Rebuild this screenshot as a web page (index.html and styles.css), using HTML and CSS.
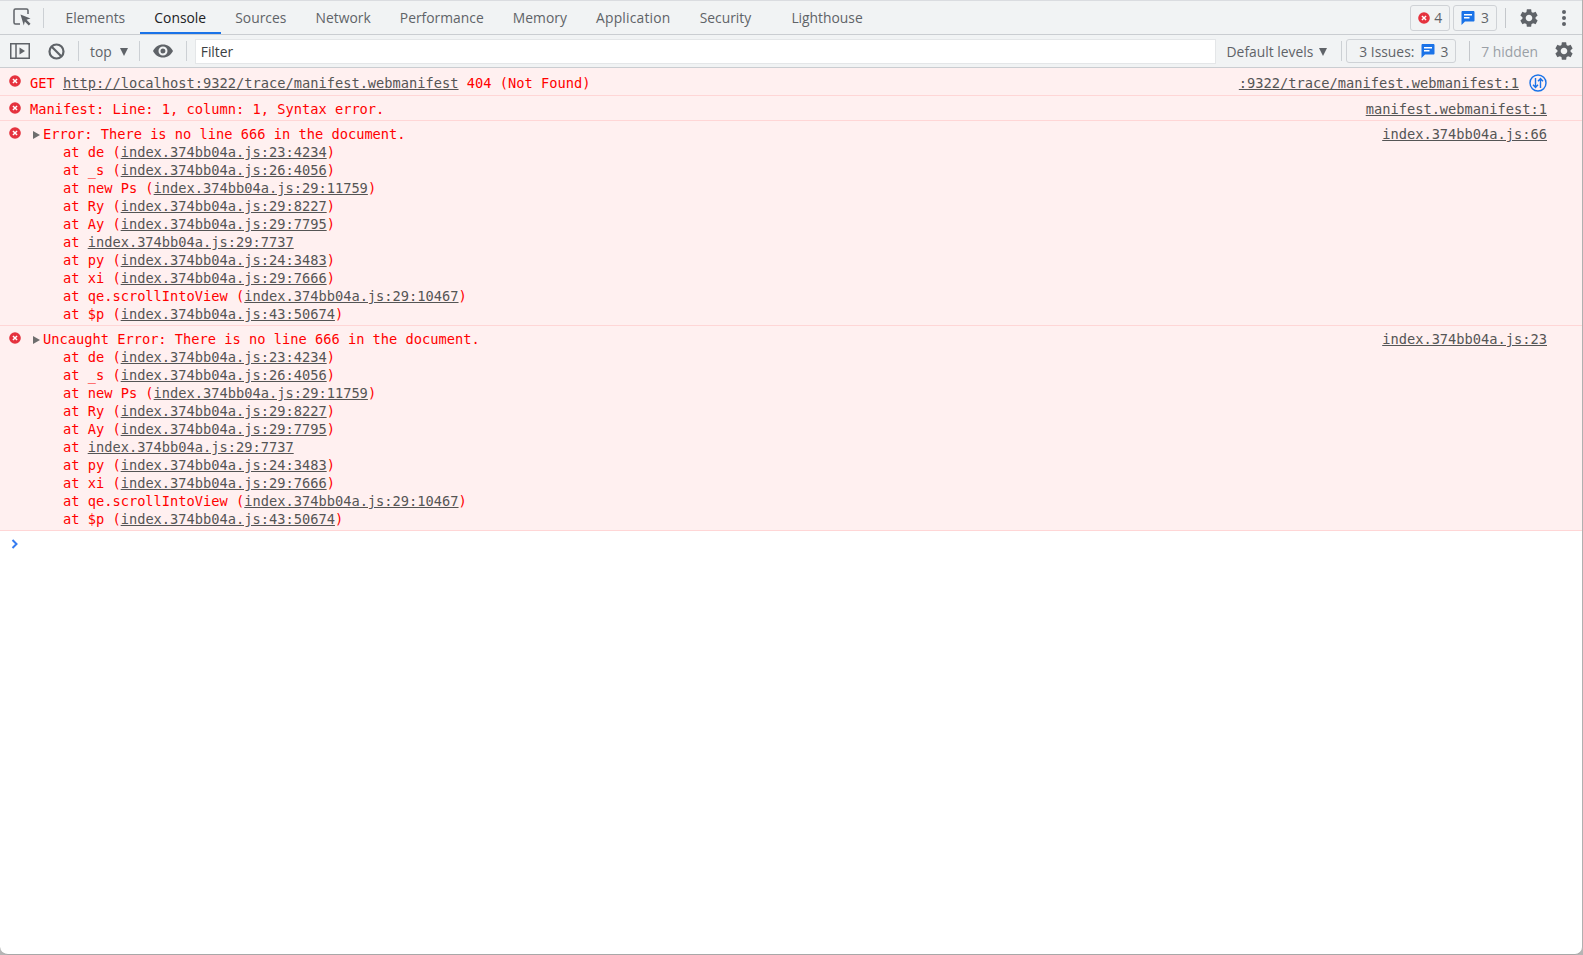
FILE: index.html
```html
<!DOCTYPE html>
<html lang="en">
<head>
    <meta charset="UTF-8">
    <title>DevTools - Console</title>
    <link rel="stylesheet" href="styles.css">
</head>
<body>
    <svg class="defs" width="0" height="0">
        <symbol id="gear" viewBox="0 0 24 24"><path d="M19.14 12.94c.04-.3.06-.61.06-.94 0-.32-.02-.64-.07-.94l2.03-1.58c.18-.14.23-.41.12-.61l-1.92-3.32c-.12-.22-.37-.29-.59-.22l-2.39.96c-.5-.38-1.03-.7-1.62-.94l-.36-2.54c-.04-.24-.24-.41-.48-.41h-3.84c-.24 0-.43.17-.47.41l-.36 2.54c-.59.24-1.13.57-1.62.94l-2.39-.96c-.22-.08-.47 0-.59.22L2.74 8.87c-.12.21-.08.47.12.61l2.03 1.58c-.05.3-.09.63-.09.94s.02.64.07.94l-2.03 1.58c-.18.14-.23.41-.12.61l1.92 3.32c.12.22.37.29.59.22l2.39-.96c.5.38 1.03.7 1.62.94l.36 2.54c.05.24.24.41.48.41h3.84c.24 0 .44-.17.47-.41l.36-2.54c.59-.24 1.13-.56 1.62-.94l2.39.96c.22.08.47 0 .59-.22l1.92-3.32c.12-.22.07-.47-.12-.61l-2.01-1.58zM12 15.6c-1.98 0-3.6-1.62-3.6-3.6s1.62-3.6 3.6-3.6 3.6 1.62 3.6 3.6-1.62 3.6-3.6 3.6z"/></symbol>
        <symbol id="err" viewBox="0 0 14 14"><circle cx="7" cy="7" r="6.8" fill="#e5323e"/><path d="M4.6 4.6l4.8 4.8M9.4 4.6l-4.8 4.8" stroke="#fff" stroke-width="1.7"/></symbol>
        <symbol id="chat" viewBox="0 0 14 16"><path d="M1.6 1h10.8c.6 0 1.1.5 1.1 1.1v8.3c0 .6-.5 1.1-1.1 1.1H4L.5 15V2.100C.5 1.500 1 1 1.600 1z" fill="#1a73e8"/><path d="M3 4h8v1.400H3zM3 7h5.500v1.400H3z" fill="#fff"/></symbol>
    </svg>

    <div class="tabbar">
        <svg class="inspect" width="19" height="19" viewBox="0 0 19 19"><path d="M7 16H2.500A1.500 1.500 0 0 1 1 14.500V2.500A1.500 1.500 0 0 1 2.500 1h11A1.500 1.500 0 0 1 15 2.500V6" fill="none" stroke="#5f6368" stroke-width="1.500"/><path d="M7.500 6.500l10 4-4 1.300 4 4-1.700 1.700-4-4-1 4z" fill="#5f6368"/></svg>
        <span class="sep sep-tabs"></span>
        <span class="tab">Elements</span>
        <span class="tab active">Console</span>
        <span class="tab">Sources</span>
        <span class="tab">Network</span>
        <span class="tab">Performance</span>
        <span class="tab">Memory</span>
        <span class="tab tab-app">Application</span>
        <span class="tab">Security</span>
        <span class="tab tab-last">Lighthouse</span>
        <span class="grow"></span>
        <span class="badge"><svg width="12" height="12"><use href="#err"/></svg>4</span>
        <span class="badge badge-msg"><svg width="14" height="16"><use href="#chat"/></svg>3</span>
        <span class="sep sep-badges"></span>
        <svg class="gear gear-top" width="22" height="22"><use href="#gear"/></svg>
        <svg class="dots" width="6" height="18" viewBox="0 0 6 18"><circle cx="3" cy="3" r="2"/><circle cx="3" cy="9" r="2"/><circle cx="3" cy="15" r="2"/></svg>
    </div>

    <div class="toolbar">
        <svg class="dock" width="20" height="16" viewBox="0 0 20 16"><rect x=".75" y=".75" width="18.500" height="14.500" fill="none" stroke="#5f6368" stroke-width="1.500"/><path d="M6 1v14" stroke="#5f6368" stroke-width="1.500"/><path d="M9.500 4.500l5.500 3.500-5.500 3.500z" fill="#5f6368"/></svg>
        <svg class="block" width="17" height="17" viewBox="0 0 17 17"><circle cx="8.500" cy="8.500" r="7" fill="none" stroke="#5f6368" stroke-width="2.200"/><path d="M3.500 3.500l10 10" stroke="#5f6368" stroke-width="2.200"/></svg>
        <span class="sep sep-a"></span>
        <span class="ctx">top</span>
        <span class="arrow arrow-ctx"></span>
        <span class="sep sep-b"></span>
        <svg class="eye" width="20" height="14" viewBox="0 0 20 14"><path d="M10 .5C5.500.5 1.800 3.200 0 7c1.800 3.800 5.500 6.500 10 6.500s8.200-2.700 10-6.500C18.200 3.200 14.500.5 10 .5zM10 11.500A4.500 4.500 0 1 1 10 2.500a4.500 4.500 0 0 1 0 9zM10 4.500a2.500 2.500 0 1 0 0 5 2.500 2.500 0 0 0 0-5z" fill="#5f6368"/></svg>
        <span class="sep sep-c"></span>
        <div class="filter">Filter</div>
        <span class="levels">Default levels</span>
        <span class="arrow arrow-levels"></span>
        <span class="sep sep-d"></span>
        <span class="issues">3 Issues:<svg width="14" height="16"><use href="#chat"/></svg>3</span>
        <span class="sep sep-e"></span>
        <span class="hidden-count">7 hidden</span>
        <svg class="gear gear-bar" width="22" height="22"><use href="#gear"/></svg>
    </div>

    <div class="console">
        <div class="row row-first">
            <svg class="icon" width="12" height="12"><use href="#err"/></svg>
            <div class="msg">GET <a>http://localhost:9322/trace/manifest.webmanifest</a> 404 (Not Found)</div>
            <a class="source">:9322/trace/manifest.webmanifest:1</a>
            <svg class="net" width="18" height="18" viewBox="0 0 18 18"><circle cx="9" cy="9" r="8" fill="none" stroke="#1a73e8" stroke-width="1.400"/><path d="M6.500 4v9.500M4 10.800l2.500 2.700 2.500-2.700M11.500 14V4.500M9 7.200l2.500-2.700 2.500 2.700" fill="none" stroke="#1a73e8" stroke-width="1.400"/></svg>
        </div>
        <div class="row">
            <svg class="icon" width="12" height="12"><use href="#err"/></svg>
            <div class="msg">Manifest: Line: 1, column: 1, Syntax error.</div>
            <a class="source">manifest.webmanifest:1</a>
        </div>
        <div class="row">
            <svg class="icon" width="12" height="12"><use href="#err"/></svg>
            <div class="msg"><span class="expand"></span>Error: There is no line 666 in the document.
    at de (<a>index.374bb04a.js:23:4234</a>)
    at _s (<a>index.374bb04a.js:26:4056</a>)
    at new Ps (<a>index.374bb04a.js:29:11759</a>)
    at Ry (<a>index.374bb04a.js:29:8227</a>)
    at Ay (<a>index.374bb04a.js:29:7795</a>)
    at <a>index.374bb04a.js:29:7737</a>
    at py (<a>index.374bb04a.js:24:3483</a>)
    at xi (<a>index.374bb04a.js:29:7666</a>)
    at qe.scrollIntoView (<a>index.374bb04a.js:29:10467</a>)
    at $p (<a>index.374bb04a.js:43:50674</a>)</div>
            <a class="source">index.374bb04a.js:66</a>
        </div>
        <div class="row">
            <svg class="icon" width="12" height="12"><use href="#err"/></svg>
            <div class="msg"><span class="expand"></span>Uncaught Error: There is no line 666 in the document.
    at de (<a>index.374bb04a.js:23:4234</a>)
    at _s (<a>index.374bb04a.js:26:4056</a>)
    at new Ps (<a>index.374bb04a.js:29:11759</a>)
    at Ry (<a>index.374bb04a.js:29:8227</a>)
    at Ay (<a>index.374bb04a.js:29:7795</a>)
    at <a>index.374bb04a.js:29:7737</a>
    at py (<a>index.374bb04a.js:24:3483</a>)
    at xi (<a>index.374bb04a.js:29:7666</a>)
    at qe.scrollIntoView (<a>index.374bb04a.js:29:10467</a>)
    at $p (<a>index.374bb04a.js:43:50674</a>)</div>
            <a class="source">index.374bb04a.js:23</a>
        </div>
        <svg class="prompt" width="8" height="10" viewBox="0 0 8 10"><path d="M1.500 1l4 4-4 4" fill="none" stroke="#367cf1" stroke-width="2"/></svg>
    </div>
</body>
</html>
```

FILE: styles.css
```css
html {
    height: 100%;
    background: #b5b5b5;
}
body {
    margin: 0;
    height: 100%;
    box-sizing: border-box;
    background: #fff;
    border-right: 1px solid #b0b0b0;
    border-bottom: 1px solid #a8a8a8;
    border-radius: 0 0 8px 8px;
    font-family: "Open Sans", "Noto Sans", sans-serif;
    font-size: 13.850px;
    color: #5f6368;
    overflow: hidden;
}
.defs {
    display: block;
    height: 0;
}
svg {
    flex: none;
}
.grow {
    flex: 1;
}
.sep {
    width: 1px;
    height: 20px;
    background: #ccd0d4;
    flex: none;
}

/* top tabs */
.tabbar {
    height: 33px;
    display: flex;
    align-items: center;
    background: #f1f3f4;
    border-top: 1px solid #dadce0;
    border-bottom: 1px solid #cacdd1;
}
.inspect {
    margin-left: 13px;
}
.sep-tabs {
    margin-left: 11px;
    margin-right: 7px;
}
.tab {
    height: 33px;
    line-height: 33px;
    padding: 0 14.600px;
    box-sizing: border-box;
}
.tab:first-of-type {
    padding-left: 14px;
}
.tab.active {
    color: #202124;
    border-bottom: 2px solid #1a73e8;
}
.tab-app {
    letter-spacing: .2px;
}
.tab-last {
    margin-left: 11px;
}
.badge {
    height: 26px;
    display: flex;
    align-items: center;
    gap: 4px;
    padding: 0 7px;
    margin-right: 3px;
    border: 1px solid #cfd2d6;
    border-radius: 3px;
    box-sizing: border-box;
}
.badge-msg {
    gap: 6px;
}
.sep-badges {
    margin-left: 5px;
    background: #c4c7cb;
}
.gear {
    fill: #5f6368;
}
.gear-top {
    margin-left: 12px;
}
.dots {
    fill: #5f6368;
    margin-left: 21px;
    margin-right: 15px;
}

/* console toolbar */
.toolbar {
    height: 32px;
    display: flex;
    align-items: center;
    background: #f1f3f4;
    border-bottom: 1px solid #cacdd1;
}
.dock {
    margin-left: 10px;
}
.block {
    margin-left: 18px;
}
.sep-a {
    margin-left: 13px;
}
.ctx {
    margin-left: 11px;
}
.arrow {
    width: 0;
    height: 0;
    border-left: 4.500px solid transparent;
    border-right: 4.500px solid transparent;
    border-top: 8px solid #5f6368;
    margin-top: 1px;
}
.arrow-ctx {
    margin-left: 8px;
}
.sep-b {
    margin-left: 11px;
}
.eye {
    margin-left: 13px;
}
.sep-c {
    margin-left: 13px;
}
.filter {
    flex: 1;
    height: 25px;
    line-height: 23px;
    margin-left: 8px;
    padding-left: 5px;
    background: #fff;
    color: #3c4043;
    border: 1px solid #e4e6e8;
    box-sizing: border-box;
}
.levels {
    margin-left: 11px;
}
.arrow-levels {
    margin-left: 6px;
}
.sep-d {
    margin-left: 14px;
}
.issues {
    height: 24px;
    display: flex;
    align-items: center;
    gap: 7px;
    margin-left: 4px;
    padding: 0 7px 0 12px;
    border: 1px solid #cfd2d6;
    border-radius: 3px;
    box-sizing: border-box;
}
.issues svg {
    margin-right: -2px;
}
.sep-e {
    margin-left: 13px;
    background: #c4c7cb;
}
.hidden-count {
    margin-left: 11px;
    color: #9aa0a6;
}
.gear-bar {
    margin-left: 15px;
    margin-right: 7px;
}

/* messages */
.console {
    font-family: "DejaVu Sans Mono", monospace;
    font-size: 13.700px;
    line-height: 18px;
    color: #f00;
}
.row {
    display: flex;
    align-items: flex-start;
    padding: 4px 35px 2px 9px;
    background: #fff0f0;
    border-bottom: 1px solid #ffd6d6;
}
.row-first {
    padding-top: 6px;
    padding-bottom: 3px;
}
.icon {
    margin-top: 2px;
    margin-right: 9px;
}
.row-first .icon {
    margin-top: 1px;
}
.msg {
    flex: 1;
    white-space: pre;
}
.msg a, .source {
    color: #555;
    text-decoration: underline;
}
.expand {
    display: inline-block;
    width: 0;
    height: 0;
    border-top: 4px solid transparent;
    border-bottom: 4px solid transparent;
    border-left: 7px solid #6e6e6e;
    margin-left: 3px;
    margin-right: 3px;
}
.net {
    margin-left: 10px;
}
.prompt {
    display: block;
    margin: 8px 0 0 11px;
}
```
